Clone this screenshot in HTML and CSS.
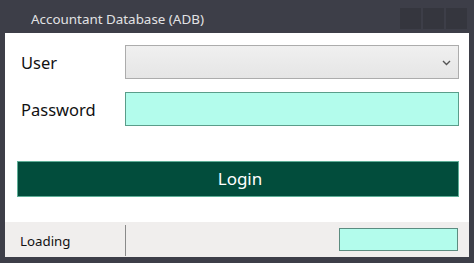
FILE: index.html
```html
<!DOCTYPE html>
<html lang="en">
<head>
    <meta charset="UTF-8">
    <title>Accountant Database (ADB)</title>
    <link rel="stylesheet" href="styles.css">
</head>
<body>

<div class="window">
    <div class="title-bar">
        <span class="title">Accountant Database (ADB)</span>
        <div class="title-buttons">
            <span class="title-button"></span>
            <span class="title-button"></span>
            <span class="title-button"></span>
        </div>
    </div>

    <div class="client">
        <div class="login-form">
            <div class="form-row">
                <label class="form-label">User</label>
                <div class="combo">
                    <svg class="chevron" width="9" height="6" viewBox="0 0 9 6">
                        <path d="M1 1 L4.5 4.5 L8 1" fill="none" stroke="#555" stroke-width="1.4"/>
                    </svg>
                </div>
            </div>
            <div class="form-row">
                <label class="form-label">Password</label>
                <div class="text-input"></div>
            </div>
            <button class="login-button">Login</button>
        </div>

        <div class="status-bar">
            <div class="status-cell">Loading</div>
            <div class="status-spacer"></div>
            <div class="status-progress"></div>
        </div>
    </div>
</div>

</body>
</html>
```

FILE: styles.css
```css
body {
    margin: 0;
    padding: 0;
    background-color: #3d3e48;
    font-family: 'Noto Sans', 'Open Sans', sans-serif;
    width: 474px;
    height: 263px;
    overflow: hidden;
}
.window {
    display: flex;
    flex-direction: column;
    height: 263px;
}
.title-bar {
    display: flex;
    align-items: flex-start;
    justify-content: space-between;
    height: 33px;
}
.title {
    color: #e2e2e4;
    font-size: 13.4px;
    margin-left: 31px;
    margin-top: 9px;
    line-height: 20px;
}
.title-buttons {
    display: flex;
    gap: 2px;
    margin-top: 8px;
    margin-right: 7px;
}
.title-button {
    width: 21px;
    height: 21px;
    background-color: #35363e;
}
.client {
    flex: 1;
    display: flex;
    flex-direction: column;
    background-color: #ffffff;
    margin: 0 5px 6px 5px;
}
.login-form {
    display: flex;
    flex-direction: column;
    padding: 12px 10px 0 12px;
    flex: 1;
}
.form-row {
    display: flex;
    align-items: center;
    margin-bottom: 13px;
}
.form-label {
    width: 104px;
    padding-left: 4px;
    font-size: 16.5px;
    color: #111;
}
.combo {
    flex: 1;
    height: 32px;
    border: 1px solid #acacac;
    background: linear-gradient(#f0f0f0, #e5e5e5);
    display: flex;
    align-items: center;
    justify-content: flex-end;
}
.chevron {
    margin-right: 7px;
    margin-top: 1px;
}
.text-input {
    flex: 1;
    height: 32px;
    border: 1px solid #5a9d8a;
    background-color: #b3fcec;
}
.login-button {
    margin-top: 22px;
    height: 36px;
    border: 1px solid #5fae97;
    background-color: #024d3c;
    color: #ffffff;
    font-family: 'Noto Sans', 'Open Sans', sans-serif;
    font-size: 17px;
    padding: 0 0 0 4px;
    line-height: 34px;
}
.status-bar {
    display: flex;
    align-items: stretch;
    height: 35px;
    background-color: #f0eeed;
}
.status-cell {
    width: 105px;
    padding-left: 15px;
    margin: 3px 0 1px 0;
    border-right: 1px solid #8a8a8a;
    font-size: 13.3px;
    color: #111;
    display: flex;
    align-items: center;
}
.status-spacer {
    flex: 1;
}
.status-progress {
    width: 117px;
    margin: 6px 11px 6px 0;
    border: 1px solid #5c8c80;
    background-color: #b3fcec;
}
```
